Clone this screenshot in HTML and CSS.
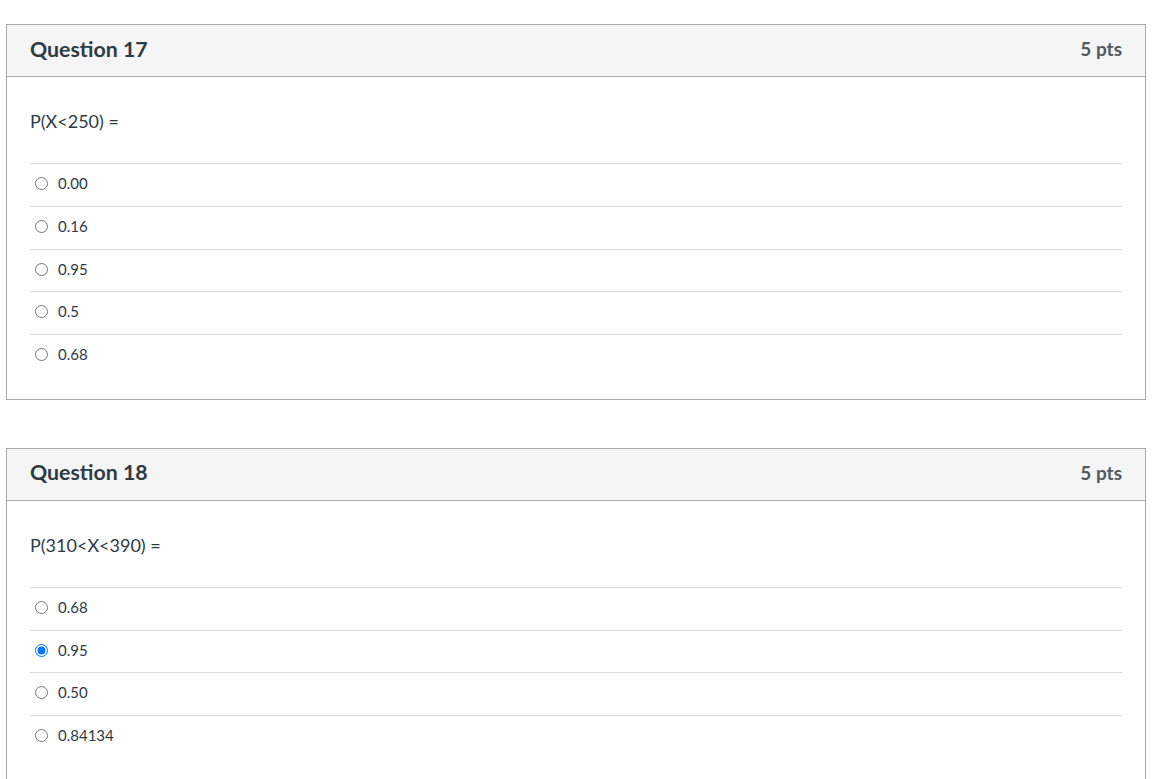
FILE: index.html
```html
<!DOCTYPE html>
<html lang="en">
<head>
<meta charset="utf-8">
<title>Quiz</title>
<link rel="stylesheet" href="styles.css">
</head>
<body>
<div class="page">
  <section class="question">
    <header class="q-header">
      <h2 class="q-title">Question 17</h2>
      <span class="q-points">5 pts</span>
    </header>
    <div class="q-body">
      <div class="q-text">P(X&lt;250) =</div>
      <div class="answers">
        <label class="answer"><input type="radio" name="q17"><span>0.00</span></label>
        <label class="answer"><input type="radio" name="q17"><span>0.16</span></label>
        <label class="answer"><input type="radio" name="q17"><span>0.95</span></label>
        <label class="answer"><input type="radio" name="q17"><span>0.5</span></label>
        <label class="answer"><input type="radio" name="q17"><span>0.68</span></label>
      </div>
    </div>
  </section>
  <section class="question">
    <header class="q-header">
      <h2 class="q-title">Question 18</h2>
      <span class="q-points">5 pts</span>
    </header>
    <div class="q-body">
      <div class="q-text">P(310&lt;X&lt;390) =</div>
      <div class="answers">
        <label class="answer"><input type="radio" name="q18"><span>0.68</span></label>
        <label class="answer"><input type="radio" name="q18" checked><span>0.95</span></label>
        <label class="answer"><input type="radio" name="q18"><span>0.50</span></label>
        <label class="answer"><input type="radio" name="q18"><span>0.84134</span></label>
      </div>
    </div>
  </section>
</div>
</body>
</html>
```
FILE: styles.css
```css
html, body {
  margin: 0;
  padding: 0;
  background: #fff;
  overflow: hidden;
  height: 100%;
}
body {
  font-family: Lato, "Open Sans", "Liberation Sans", sans-serif;
  color: #2d3b45;
}
.page {
  padding: 24px 0 0 6px;
  width: 1140px;
  display: flex;
  flex-direction: column;
  gap: 48px;
}
.question {
  border: 1px solid #aaaaaa;
  background: #fff;
}
.q-header {
  box-sizing: border-box;
  height: 52px;
  background: #f5f5f5;
  border-bottom: 1px solid #aaaaaa;
  display: flex;
  align-items: center;
  justify-content: space-between;
  padding: 0 23px 4px;
}
.q-title {
  margin: 0;
  font-size: 21.3px;
  font-weight: 700;
  color: #2d3b45;
}
.q-points {
  font-size: 19px;
  font-weight: 700;
  color: #525a60;
}
.q-body {
  padding: 32px 23px 22px;
}
.question:last-child .q-body {
  padding-bottom: 60px;
}
.q-text {
  font-size: 18px;
  line-height: 24px;
  margin-bottom: 30px;
}
.answers {
  display: flex;
  flex-direction: column;
}
.answer {
  display: flex;
  align-items: center;
  border-top: 1px solid #dddddd;
  padding: 9px 0 11.75px;
  font-size: 15px;
  line-height: 21px;
}
.answer input {
  margin: 0 10px 0 5px;
  width: 13px;
  height: 13px;
}
```
